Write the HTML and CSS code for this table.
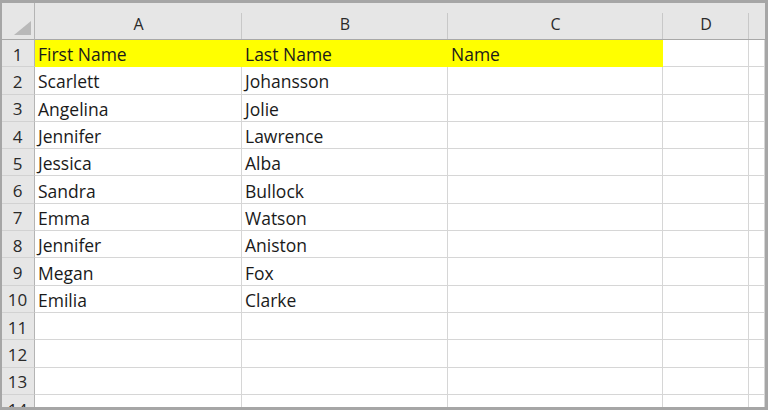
FILE: index.html
```html
<!DOCTYPE html>
<html>
<head>
<meta charset="utf-8">
<link rel="stylesheet" href="styles.css">
</head>
<body>
<div class="sheet">
  <div class="corner"><span class="tri"></span></div>
  <div class="ch">A</div>
  <div class="ch">B</div>
  <div class="ch">C</div>
  <div class="ch">D</div>
  <div class="ch last"></div>

  <div class="rh">1</div><div class="c hl">First Name</div><div class="c hl">Last Name</div><div class="c hl">Name</div><div class="c"></div><div class="c"></div>
  <div class="rh">2</div><div class="c">Scarlett</div><div class="c">Johansson</div><div class="c"></div><div class="c"></div><div class="c"></div>
  <div class="rh">3</div><div class="c">Angelina</div><div class="c">Jolie</div><div class="c"></div><div class="c"></div><div class="c"></div>
  <div class="rh">4</div><div class="c">Jennifer</div><div class="c">Lawrence</div><div class="c"></div><div class="c"></div><div class="c"></div>
  <div class="rh">5</div><div class="c">Jessica</div><div class="c">Alba</div><div class="c"></div><div class="c"></div><div class="c"></div>
  <div class="rh">6</div><div class="c">Sandra</div><div class="c">Bullock</div><div class="c"></div><div class="c"></div><div class="c"></div>
  <div class="rh">7</div><div class="c">Emma</div><div class="c">Watson</div><div class="c"></div><div class="c"></div><div class="c"></div>
  <div class="rh">8</div><div class="c">Jennifer</div><div class="c">Aniston</div><div class="c"></div><div class="c"></div><div class="c"></div>
  <div class="rh">9</div><div class="c">Megan</div><div class="c">Fox</div><div class="c"></div><div class="c"></div><div class="c"></div>
  <div class="rh">10</div><div class="c">Emilia</div><div class="c">Clarke</div><div class="c"></div><div class="c"></div><div class="c"></div>
  <div class="rh">11</div><div class="c"></div><div class="c"></div><div class="c"></div><div class="c"></div><div class="c"></div>
  <div class="rh">12</div><div class="c"></div><div class="c"></div><div class="c"></div><div class="c"></div><div class="c"></div>
  <div class="rh">13</div><div class="c"></div><div class="c"></div><div class="c"></div><div class="c"></div><div class="c"></div>
  <div class="rh">14</div><div class="c"></div><div class="c"></div><div class="c"></div><div class="c"></div><div class="c"></div>
</div>
</body>
</html>
```
FILE: styles.css
```css
html, body {
  margin: 0;
  padding: 0;
  background: #ffffff;
}
body {
  width: 768px;
  height: 410px;
  overflow: hidden;
  font-family: "Open Sans", "Noto Sans", sans-serif;
}
.sheet {
  box-sizing: border-box;
  width: 768px;
  height: 410px;
  border-style: solid;
  border-color: #a6a6a6;
  border-width: 3px 3px 3px 2px;
  overflow: hidden;
  display: grid;
  grid-template-columns: 33px 207px 206px 215px 86px 1fr;
  grid-template-rows: 37px repeat(14, 27.3px);
  background: #ffffff;
}
.corner {
  background: #e6e6e6;
  border-right: 1px solid #b4b4b4;
  border-bottom: 1px solid #a8a8a8;
  display: flex;
  align-items: flex-end;
  justify-content: flex-end;
  padding: 0 3px 4px 0;
}
.tri {
  width: 0;
  height: 0;
  border-left: 17px solid transparent;
  border-bottom: 14px solid #b9b9b9;
}
.ch {
  background:
    linear-gradient(to right, transparent calc(100% - 1px), #c8c8c8 0) right bottom / 100% 26px no-repeat,
    #e6e6e6;
  border-bottom: 1px solid #a8a8a8;
  color: #2a2a2a;
  font-size: 16px;
  display: flex;
  align-items: center;
  justify-content: center;
  padding-top: 5px;
}
.ch.last {
  background: #e6e6e6;
}
.rh {
  background: #e6e6e6;
  border-right: 1px solid #b4b4b4;
  border-bottom: 1px solid #d2d2d2;
  color: #2a2a2a;
  font-size: 17px;
  display: flex;
  align-items: center;
  justify-content: center;
  padding-top: 2px;
  padding-right: 1px;
}
.c {
  border-right: 1px solid #d6d6d6;
  border-bottom: 1px solid #d6d6d6;
  color: #1a1a1a;
  font-size: 17.5px;
  display: flex;
  align-items: center;
  padding-left: 3px;
  padding-top: 2px;
  white-space: nowrap;
  overflow: hidden;
}
.c.hl {
  background: #ffff00;
  border-right-color: #ffff00;
  border-bottom-color: #ffff00;
}
```
